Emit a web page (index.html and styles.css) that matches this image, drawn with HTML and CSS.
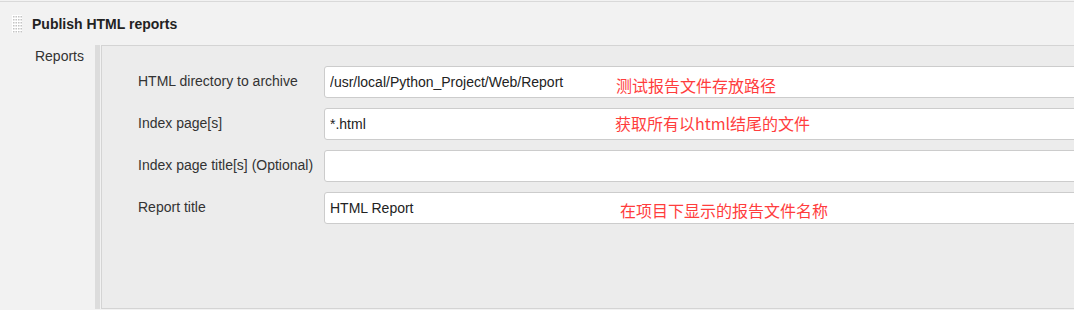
FILE: index.html
```html
<!DOCTYPE html>
<html lang="en">
<head>
    <meta charset="UTF-8">
    <title>Publish HTML reports</title>
    <link rel="stylesheet" href="styles.css">
</head>
<body>

    <!-- Section header -->
    <div class="section-header">
        <svg class="grip" width="10" height="18" viewBox="0 0 10 18">
            <rect width="10" height="18" fill="#fff"/>
            <g fill="#c4c4c4">
                <rect x="1" y="1" width="1.5" height="1.5"/><rect x="3.5" y="1" width="1.5" height="1.5"/><rect x="6" y="1" width="1.5" height="1.5"/><rect x="8.5" y="1" width="1.5" height="1.5"/>
                <rect x="1" y="4" width="1.5" height="1.5"/><rect x="3.5" y="4" width="1.5" height="1.5"/><rect x="6" y="4" width="1.5" height="1.5"/><rect x="8.5" y="4" width="1.5" height="1.5"/>
                <rect x="1" y="7" width="1.5" height="1.5"/><rect x="3.5" y="7" width="1.5" height="1.5"/><rect x="6" y="7" width="1.5" height="1.5"/><rect x="8.5" y="7" width="1.5" height="1.5"/>
                <rect x="1" y="10" width="1.5" height="1.5"/><rect x="3.5" y="10" width="1.5" height="1.5"/><rect x="6" y="10" width="1.5" height="1.5"/><rect x="8.5" y="10" width="1.5" height="1.5"/>
                <rect x="1" y="13" width="1.5" height="1.5"/><rect x="3.5" y="13" width="1.5" height="1.5"/><rect x="6" y="13" width="1.5" height="1.5"/><rect x="8.5" y="13" width="1.5" height="1.5"/>
                <rect x="1" y="16" width="1.5" height="1.5"/><rect x="3.5" y="16" width="1.5" height="1.5"/><rect x="6" y="16" width="1.5" height="1.5"/><rect x="8.5" y="16" width="1.5" height="1.5"/>
            </g>
        </svg>
        <span class="section-title">Publish HTML reports</span>
    </div>

    <!-- Reports block -->
    <div class="section-body">
        <div class="side-label">Reports</div>
        <div class="side-bar"></div>

        <div class="panel">
            <div class="row">
                <label class="row-label">HTML directory to archive</label>
                <div class="field">
                    <input class="text-input" type="text" value="/usr/local/Python_Project/Web/Report">
                    <span class="note note-1">测试报告文件存放路径</span>
                </div>
            </div>

            <div class="row">
                <label class="row-label">Index page[s]</label>
                <div class="field">
                    <input class="text-input" type="text" value="*.html">
                    <span class="note note-2">获取所有以html结尾的文件</span>
                </div>
            </div>

            <div class="row">
                <label class="row-label">Index page title[s] (Optional)</label>
                <div class="field">
                    <input class="text-input" type="text" value="">
                </div>
            </div>

            <div class="row">
                <label class="row-label">Report title</label>
                <div class="field">
                    <input class="text-input" type="text" value="HTML Report">
                    <span class="note note-4">在项目下显示的报告文件名称</span>
                </div>
            </div>
        </div>
    </div>

</body>
</html>
```

FILE: styles.css
```css
body {
    font-family: Arial, "Liberation Sans", sans-serif;
    font-size: 14px;
    color: #333;
    margin: 0;
    padding-top: 1px;
    background-color: #f2f2f2;
    overflow: hidden;
    height: 310px;
}

/* 🔹 Section header */
.section-header {
    display: flex;
    align-items: center;
    height: 44px;
    border-top: 1px solid #d9d9d9;
    padding-left: 12px;
    box-sizing: border-box;
}

.grip {
    display: block;
    margin-right: 10px;
    margin-top: 1px;
}

.section-title {
    font-weight: bold;
    color: #222;
}

/* 🔹 Reports block */
.section-body {
    display: flex;
    height: 264px;
}

.side-label {
    width: 84px;
    text-align: right;
    padding-right: 11px;
    padding-top: 3px;
    flex-shrink: 0;
}

.side-bar {
    width: 5px;
    background-color: #dcdcdc;
    margin-right: 1px;
    flex-shrink: 0;
}

.panel {
    flex: 1;
    margin-right: -30px;
    background-color: #ececec;
    border: 1px solid #d4d4d4;
    padding: 20px 0 0 36px;
    display: flex;
    flex-direction: column;
    gap: 10px;
}

.row {
    display: flex;
    align-items: center;
}

.row-label {
    width: 186px;
    flex-shrink: 0;
    margin-top: -2px;
}

.field {
    position: relative;
    flex: 1;
}

.text-input {
    display: block;
    width: 100%;
    height: 32px;
    box-sizing: border-box;
    border: 1px solid #cccccc;
    border-radius: 3px;
    background: white;
    padding: 0 5px;
    font-family: Arial, "Liberation Sans", sans-serif;
    font-size: 14px;
    color: #222;
    outline: none;
}

/* 🔹 Red annotations over the inputs */
.note {
    position: absolute;
    font-family: "Noto Sans CJK SC", sans-serif;
    font-size: 16px;
    line-height: 20px;
    color: #ff3d3d;
    white-space: nowrap;
}

.note-1 {
    left: 292px;
    top: 9px;
}

.note-2 {
    left: 291px;
    top: 5px;
}

.note-4 {
    left: 296px;
    top: 8px;
}
```
